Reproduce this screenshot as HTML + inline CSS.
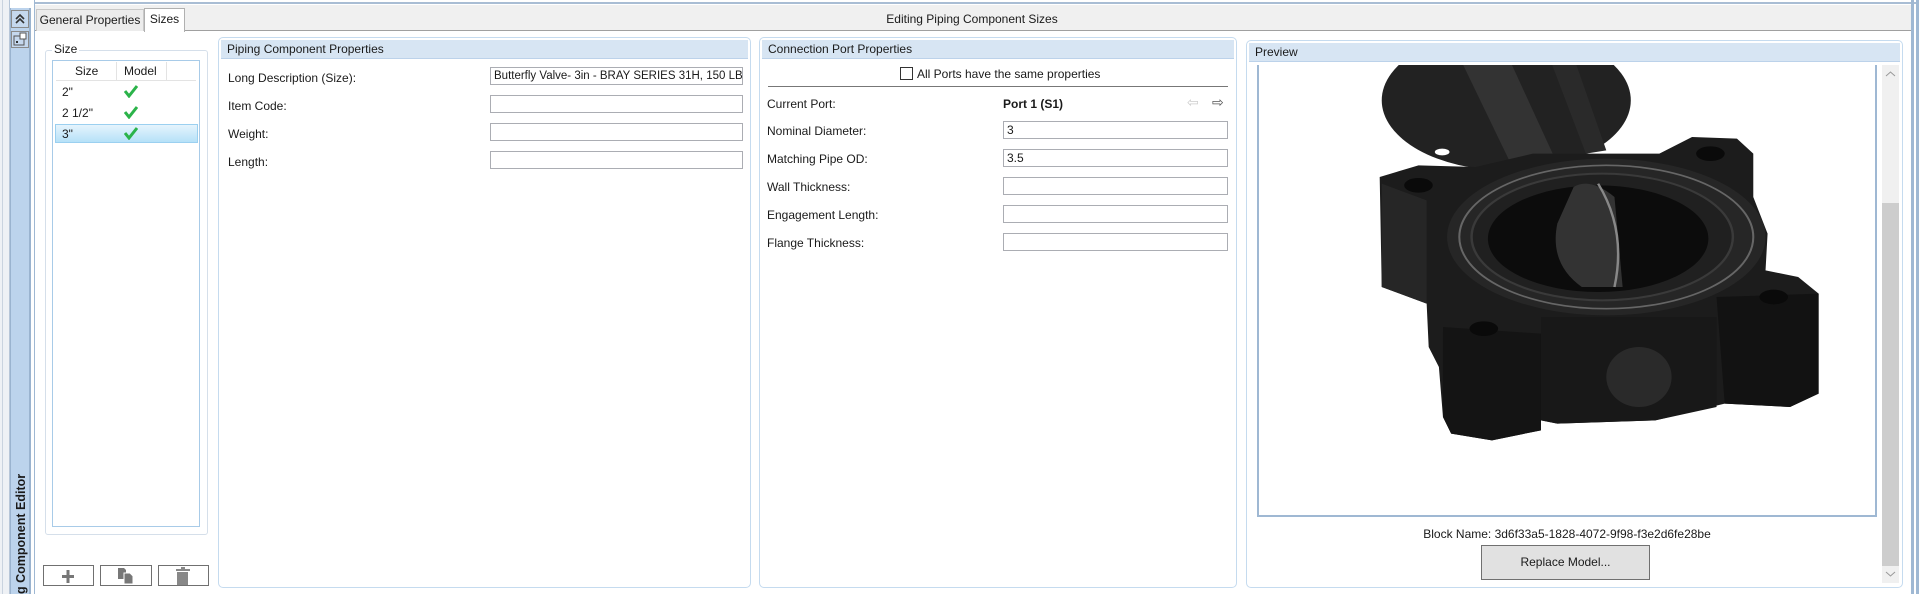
<!DOCTYPE html>
<html><head><meta charset="utf-8">
<style>
*{box-sizing:border-box;margin:0;padding:0}
html,body{width:1919px;height:594px;overflow:hidden}
body{background:#fff;font-family:"Liberation Sans",sans-serif;font-size:12px;color:#1a1a1a;position:relative}
.a{position:absolute}
.panel{position:absolute;border:1px solid #c5dbef;border-radius:5px;background:#fff}
.hdr{position:absolute;left:2px;right:2px;top:2px;height:19px;background:#d7e5f3;border-bottom:1px solid #bcd2ea;padding-left:6px;line-height:18px;font-size:12px}
.inp{position:absolute;height:18px;border:1px solid #abadb3;background:#fff;padding-left:3px;line-height:16px;font-size:12px;white-space:nowrap;overflow:hidden}
.lbl{position:absolute;font-size:12px}
.btn{position:absolute;border:1px solid #707070;background:#fff}
</style></head><body>
<!-- left strip -->
<div class="a" style="left:0;top:0;width:10px;height:594px;background:#eef1f5;border-right:1px solid #b7c6d8"></div>
<div class="a" style="left:2px;top:0;width:1px;height:594px;background:#c9d3df"></div>
<div class="a" style="left:10px;top:8px;width:21px;height:586px;background:#bcd3ec;border-left:1px solid #9ab3cf;border-right:2px solid #9ab3cf"></div>
<div class="a" style="left:11px;top:10px;width:18px;height:18px;border:1px solid #8a8a8a;background:#c5d8ee"></div>
<svg class="a" style="left:11px;top:10px" width="18" height="18"><path d="M5 9 L9 5 L13 9 M5 13 L9 9 L13 13" stroke="#333" stroke-width="1.6" fill="none"/></svg>
<div class="a" style="left:11px;top:31px;width:18px;height:17px;border:1px solid #8a8a8a;background:#c5d8ee"></div>
<svg class="a" style="left:11px;top:31px" width="18" height="17"><rect x="3" y="5" width="10" height="9" fill="none" stroke="#555"/><rect x="9" y="2" width="6" height="6" fill="#fff" stroke="#555"/><rect x="5" y="10" width="2" height="2" fill="#333"/></svg>
<div class="a" style="left:34px;top:0;width:1px;height:594px;background:#9fb8d3"></div>
<div class="a" style="left:13px;top:459px;width:16px;height:135px;overflow:hidden"><div style="position:absolute;left:0;top:0;width:135px;height:16px;transform-origin:0 0;transform:translate(0,135px) rotate(-90deg);white-space:nowrap;font-weight:bold;font-size:12.5px;line-height:16px;text-align:left;padding-left:0">g Component Editor</div></div>

<!-- top -->
<div class="a" style="left:35px;top:0;width:1884px;height:4px;background:#fff;border-bottom:2px solid #a9bdd4"></div>
<div class="a" style="left:35px;top:5px;width:1877px;height:26px;background:#f0f0f0;border-bottom:1px solid #a0a0a0"></div>
<div class="a" style="left:36px;top:9px;width:108px;height:22px;background:#ececec;border:1px solid #c8c8c8;border-bottom:none;line-height:20px;text-align:center;font-size:12px">General Properties</div>
<div class="a" style="left:144px;top:8px;width:41px;height:24px;background:#fff;border:1px solid #b0b0b0;border-bottom:none;line-height:20px;text-align:center;font-size:12px">Sizes</div>
<div class="a" style="left:700px;top:12px;width:544px;text-align:center;font-size:12px">Editing Piping Component Sizes</div>
<div class="a" style="left:1911px;top:0;width:3px;height:594px;background:#9fb8d3"></div>
<div class="a" style="left:1916px;top:0;width:3px;height:594px;background:#9fb8d3"></div>

<!-- size group -->
<div class="a" style="left:45px;top:50px;width:163px;height:485px;border:1px solid #d5dfea;border-radius:3px"></div>
<div class="a" style="left:52px;top:42px;background:#fff;padding:0 2px;font-size:12px">Size</div>
<div class="a" style="left:52px;top:60px;width:148px;height:467px;border:1px solid #a8cbe8;background:#fff"></div>
<div class="a" style="left:56px;top:62px;width:140px;height:19px;border-bottom:1px solid #e3e3e3"></div>
<div class="a" style="left:116px;top:62px;width:1px;height:19px;background:#e3e3e3"></div>
<div class="a" style="left:166px;top:62px;width:1px;height:19px;background:#e3e3e3"></div>
<div class="lbl" style="left:75px;top:64px">Size</div>
<div class="lbl" style="left:124px;top:64px">Model</div>
<div class="lbl" style="left:62px;top:85px">2"</div>
<div class="lbl" style="left:62px;top:106px">2 1/2"</div>
<div class="a" style="left:55px;top:124px;width:143px;height:19px;border:1px solid #9bd0f0;background:linear-gradient(#e5f4fd,#b6e1f8)"></div>
<div class="lbl" style="left:62px;top:127px">3"</div>
<svg class="a" style="left:124px;top:84px" width="14" height="14"><path d="M1 7 L5 12 L13 2" stroke="#2bb34a" stroke-width="3" fill="none"/></svg>
<svg class="a" style="left:124px;top:105px" width="14" height="14"><path d="M1 7 L5 12 L13 2" stroke="#2bb34a" stroke-width="3" fill="none"/></svg>
<svg class="a" style="left:124px;top:126px" width="14" height="14"><path d="M1 7 L5 12 L13 2" stroke="#2bb34a" stroke-width="3" fill="none"/></svg>
<div class="btn" style="left:43px;top:565px;width:51px;height:21px"></div>
<svg class="a" style="left:59px;top:567px" width="18" height="18"><path d="M9 3 V16 M3 9.5 H15" stroke="#777" stroke-width="3"/></svg>
<div class="btn" style="left:100px;top:565px;width:52px;height:21px"></div>
<svg class="a" style="left:116px;top:567px" width="20" height="18"><path d="M2 1 H8 L10 3 V12 H2 Z" fill="#777"/><path d="M8 6 H14 L17 9 V17 H8 Z" fill="#777" stroke="#fff" stroke-width="1"/></svg>
<div class="btn" style="left:158px;top:565px;width:51px;height:21px"></div>
<svg class="a" style="left:175px;top:567px" width="16" height="18"><rect x="1" y="2" width="14" height="2" fill="#888"/><rect x="6" y="0" width="4" height="2" fill="#888"/><rect x="2" y="5" width="11" height="13" fill="#888"/></svg>

<!-- piping panel -->
<div class="panel" style="left:218px;top:37px;width:533px;height:551px">
<div class="hdr">Piping Component Properties</div></div>
<div class="lbl" style="left:228px;top:71px">Long Description (Size):</div>
<div class="lbl" style="left:228px;top:99px">Item Code:</div>
<div class="lbl" style="left:228px;top:127px">Weight:</div>
<div class="lbl" style="left:228px;top:155px">Length:</div>
<div class="inp" style="left:490px;top:67px;width:253px;font-size:11.5px">Butterfly Valve- 3in - BRAY SERIES 31H, 150 LB,</div>
<div class="inp" style="left:490px;top:95px;width:253px"></div>
<div class="inp" style="left:490px;top:123px;width:253px"></div>
<div class="inp" style="left:490px;top:151px;width:253px"></div>

<!-- connection panel -->
<div class="panel" style="left:759px;top:37px;width:478px;height:551px">
<div class="hdr">Connection Port Properties</div></div>
<div class="a" style="left:900px;top:67px;width:13px;height:13px;border:1px solid #333;background:#fff"></div>
<div class="lbl" style="left:917px;top:67px">All Ports have the same properties</div>
<div class="a" style="left:768px;top:86px;width:460px;height:1px;background:#777"></div>
<div class="lbl" style="left:767px;top:97px">Current Port:</div>
<div class="lbl" style="left:1003px;top:97px;font-weight:bold">Port 1 (S1)</div>
<div class="a" style="left:1187px;top:94px;color:#ccc;font-size:14px">⇦</div>
<div class="a" style="left:1212px;top:94px;color:#555;font-size:14px">⇨</div>
<div class="lbl" style="left:767px;top:124px">Nominal Diameter:</div>
<div class="lbl" style="left:767px;top:152px">Matching Pipe OD:</div>
<div class="lbl" style="left:767px;top:180px">Wall Thickness:</div>
<div class="lbl" style="left:767px;top:208px">Engagement Length:</div>
<div class="lbl" style="left:767px;top:236px">Flange Thickness:</div>
<div class="inp" style="left:1003px;top:121px;width:225px">3</div>
<div class="inp" style="left:1003px;top:149px;width:225px">3.5</div>
<div class="inp" style="left:1003px;top:177px;width:225px"></div>
<div class="inp" style="left:1003px;top:205px;width:225px"></div>
<div class="inp" style="left:1003px;top:233px;width:225px"></div>

<!-- preview panel -->
<div class="panel" style="left:1246px;top:40px;width:657px;height:548px">
<div class="hdr">Preview</div></div>
<div class="a" style="left:1257px;top:65px;width:620px;height:452px;border:2px solid #9fb8d3;border-top:none;background:#fff;overflow:hidden">
<svg style="position:absolute;left:-12px;top:0" width="630" height="390" viewBox="0 24 1543 1170" preserveAspectRatio="none">
<ellipse cx="635" cy="130" rx="305" ry="210" fill="#222"/>
<path d="M520 0 L640 0 L760 320 L650 330 Z" fill="#333"/>
<path d="M740 0 L800 0 L880 280 L830 290 Z" fill="#2a2a2a"/>
<path d="M325 360 L420 325 L560 330 L700 290 L1010 290 L1090 240 L1200 245 L1240 290 L1240 420 L1275 530 L1270 640 L1350 660 L1400 710 L1400 1010 L1330 1050 L1170 1040 L1000 1090 L760 1100 L720 1090 L720 1120 L600 1150 L500 1130 L480 1080 L470 930 L445 870 L440 740 L330 690 Z" fill="#1c1c1c"/>
<path d="M330 380 L440 430 L440 740 L330 690 Z" fill="#262626"/>
<path d="M480 810 L720 830 L720 1120 L600 1150 L500 1130 L480 1080 Z" fill="#141414"/>
<path d="M1150 720 L1400 710 L1400 1010 L1330 1050 L1170 1040 Z" fill="#121212"/>
<path d="M720 780 L1150 780 L1150 1050 L1000 1090 L760 1100 L720 1090 Z" fill="#181818"/>
<ellipse cx="880" cy="540" rx="390" ry="235" fill="#262626"/>
<ellipse cx="880" cy="540" rx="360" ry="215" fill="none" stroke="#666" stroke-width="5"/>
<ellipse cx="870" cy="540" rx="320" ry="190" fill="#202020" stroke="#3a3a3a" stroke-width="6"/>
<ellipse cx="860" cy="545" rx="270" ry="160" fill="#0c0c0c"/>
<path d="M800 390 Q840 360 900 420 L920 690 L820 690 Q740 620 760 500 Z" fill="#333"/>
<path d="M860 380 Q930 520 900 690" stroke="#888" stroke-width="6" fill="none"/>
<ellipse cx="420" cy="385" rx="35" ry="22" fill="#0a0a0a"/>
<ellipse cx="1135" cy="290" rx="35" ry="22" fill="#0a0a0a"/>
<ellipse cx="1290" cy="720" rx="35" ry="22" fill="#0a0a0a"/>
<ellipse cx="580" cy="815" rx="35" ry="22" fill="#0a0a0a"/>
<ellipse cx="960" cy="960" rx="80" ry="90" fill="#2a2a2a"/>
<ellipse cx="478" cy="285" rx="18" ry="10" fill="#fff"/>
</svg></div>
<div class="a" style="left:1882px;top:65px;width:17px;height:518px;background:#f0f0f0"></div>
<div class="a" style="left:1882px;top:203px;width:17px;height:363px;background:#cdcdcd"></div>
<svg class="a" style="left:1885px;top:70px" width="11" height="8"><path d="M1 6 L5.5 2 L10 6" stroke="#999" fill="none"/></svg>
<svg class="a" style="left:1885px;top:570px" width="11" height="8"><path d="M1 2 L5.5 6 L10 2" stroke="#999" fill="none"/></svg>
<div class="a" style="left:1257px;top:527px;width:620px;text-align:center;font-size:12px">Block Name: 3d6f33a5-1828-4072-9f98-f3e2d6fe28be</div>
<div class="a" style="left:1481px;top:545px;width:169px;height:35px;border:1px solid #707070;background:#e1e1e1;text-align:center;line-height:33px;font-size:12px">Replace Model...</div>
</body></html>
